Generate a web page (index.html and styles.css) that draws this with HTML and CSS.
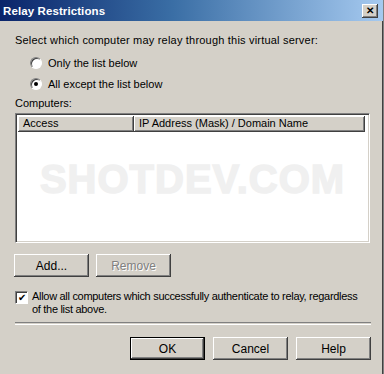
FILE: index.html
```html
<!DOCTYPE html>
<html lang="en">
<head>
    <meta charset="UTF-8">
    <title>Relay Restrictions</title>
    <link rel="stylesheet" href="styles.css">
</head>
<body>
    <div class="window">
        <div class="titlebar">
            <span class="title">Relay Restrictions</span>
            <span class="close">&#x2715;</span>
        </div>
        <div class="content">
            <div class="line intro">Select which computer may relay through this virtual server:</div>

            <div class="option first">
                <span class="radio"></span>
                <span>Only the list below</span>
            </div>
            <div class="option">
                <span class="radio checked"></span>
                <span>All except the list below</span>
            </div>

            <div class="line label">Computers:</div>

            <div class="listbox">
                <div class="list-header">
                    <div class="col access">Access</div>
                    <div class="col address">IP Address (Mask) / Domain Name</div>
                </div>
                <div class="list-body">
                    <span class="watermark">SHOTDEV.COM</span>
                </div>
            </div>

            <div class="row-buttons">
                <button class="btn">Add...</button>
                <button class="btn" disabled>Remove</button>
            </div>

            <div class="auth">
                <span class="checkbox">&#10004;</span>
                <span class="auth-text">Allow all computers which successfully authenticate to relay, regardless of the list above.</span>
            </div>

            <div class="separator"></div>

            <div class="footer">
                <button class="btn default">OK</button>
                <button class="btn">Cancel</button>
                <button class="btn">Help</button>
            </div>
        </div>
    </div>
</body>
</html>
```

FILE: styles.css
```css
body {
    margin: 0;
    font-family: Tahoma, "Liberation Sans", Arial, sans-serif;
    font-size: 11px;
    color: #000;
    background: #d4d0c8;
}

.window {
    width: 384px;
    height: 374px;
    box-sizing: border-box;
    background-color: #d4d0c8;
    border-right: 1px solid #808080;
    box-shadow: inset -1px 0 0 #404040;
    overflow: hidden;
}

.titlebar {
    height: 21px;
    display: flex;
    align-items: center;
    justify-content: space-between;
    padding: 0 5px 0 3px;
    background: linear-gradient(to right, #0a246a 0%, #3a6ea5 45%, #a6caf0 100%);
}

.title {
    color: white;
    font-weight: bold;
    font-size: 11.5px;
    letter-spacing: 0.1px;
}

.close {
    width: 16px;
    height: 14px;
    display: flex;
    align-items: center;
    justify-content: center;
    background-color: #d4d0c8;
    font-size: 10px;
    font-weight: bold;
    box-shadow: inset -1px -1px 0 #404040, inset 1px 1px 0 #ffffff, inset -2px -2px 0 #808080;
}

.content {
    padding: 0 12px 0 15px;
}

.line {
    height: 14px;
    line-height: 14px;
    white-space: nowrap;
}

.intro {
    margin-top: 12px;
    letter-spacing: 0.2px;
}

.option {
    display: flex;
    align-items: center;
    gap: 6px;
    height: 14px;
    margin-top: 7px;
    padding-left: 15px;
}

.option.first {
    margin-top: 9px;
}

.radio {
    position: relative;
    width: 12px;
    height: 12px;
    box-sizing: border-box;
    border-radius: 50%;
    background: white;
    border: 1px solid;
    border-color: #808080 #ffffff #ffffff #808080;
    box-shadow: inset 1px 1px 0 #404040;
}

.radio.checked::after {
    content: "";
    position: absolute;
    left: 3px;
    top: 3px;
    width: 4px;
    height: 4px;
    border-radius: 50%;
    background: #000;
}

.label {
    margin-top: 5px;
}

.listbox {
    margin-top: 3px;
    width: 355px;
    height: 130px;
    box-sizing: border-box;
    background: white;
    border: 1px solid;
    border-color: #808080 #ffffff #ffffff #808080;
    box-shadow: inset 1px 1px 0 #404040, inset -1px -1px 0 #d4d0c8;
    padding: 2px;
    display: flex;
    flex-direction: column;
}

.list-header {
    display: flex;
    height: 16px;
}

.col {
    box-sizing: border-box;
    height: 16px;
    line-height: 15px;
    padding-left: 5px;
    background: #d4d0c8;
    box-shadow: inset -1px -1px 0 #404040, inset 1px 1px 0 #ffffff, inset -2px -2px 0 #808080;
}

.col.access {
    width: 116px;
}

.col.address {
    flex: 1;
    margin-right: 2px;
}

.list-body {
    flex: 1;
    display: flex;
    align-items: center;
    justify-content: center;
    padding-bottom: 14px;
}

.watermark {
    font-family: "Liberation Sans", Arial, sans-serif;
    font-weight: bold;
    font-size: 40px;
    letter-spacing: 1px;
    color: #f0f0f0;
    -webkit-text-stroke: 1.5px #f0f0f0;
}

.btn {
    width: 75px;
    height: 23px;
    padding: 0;
    border: 0;
    font-family: inherit;
    font-size: 12px;
    color: #000;
    background-color: #d4d0c8;
    box-shadow: inset -1px -1px 0 #404040, inset 1px 1px 0 #ffffff, inset -2px -2px 0 #808080;
}

.btn:disabled {
    color: #808080;
    text-shadow: 1px 1px 0 #ffffff;
}

.btn.default {
    box-shadow: inset 0 0 0 1px #000, inset -2px -2px 0 #404040, inset 2px 2px 0 #ffffff, inset -3px -3px 0 #808080;
}

.row-buttons {
    display: flex;
    gap: 7px;
    margin-top: 11px;
    margin-left: -1px;
}

.auth {
    display: flex;
    align-items: flex-start;
    gap: 4px;
    margin-top: 13px;
}

.checkbox {
    flex: none;
    width: 13px;
    height: 13px;
    box-sizing: border-box;
    margin-top: 1px;
    background: white;
    border: 1px solid;
    border-color: #808080 #ffffff #ffffff #808080;
    box-shadow: inset 1px 1px 0 #404040;
    font-size: 10px;
    line-height: 11px;
    text-align: center;
}

.auth-text {
    line-height: 13px;
    width: 328px;
    letter-spacing: -0.3px;
}

.separator {
    margin-top: 6px;
    width: 356px;
    height: 1px;
    border-top: 1px solid #808080;
    border-bottom: 1px solid #ffffff;
}

.footer {
    display: flex;
    justify-content: flex-end;
    gap: 8px;
    margin-top: 12px;
}
```
